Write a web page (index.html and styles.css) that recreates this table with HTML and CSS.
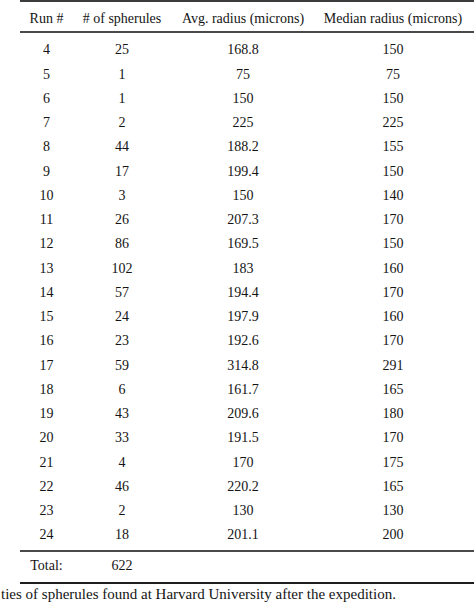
FILE: index.html
```html
<!DOCTYPE html>
<html>
<head>
<meta charset="utf-8">
<link rel="stylesheet" href="styles.css">
</head>
<body>
<div class="page">
  <div class="tbl">
    <div class="rule-top"></div>
    <div class="head row"><span>Run #</span><span># of spherules</span><span>Avg. radius (microns)</span><span>Median radius (microns)</span></div>
    <div class="rule-mid"></div>
    <div class="body">
      <div class="row"><span>4</span><span>25</span><span>168.8</span><span>150</span></div>
      <div class="row"><span>5</span><span>1</span><span>75</span><span>75</span></div>
      <div class="row"><span>6</span><span>1</span><span>150</span><span>150</span></div>
      <div class="row"><span>7</span><span>2</span><span>225</span><span>225</span></div>
      <div class="row"><span>8</span><span>44</span><span>188.2</span><span>155</span></div>
      <div class="row"><span>9</span><span>17</span><span>199.4</span><span>150</span></div>
      <div class="row"><span>10</span><span>3</span><span>150</span><span>140</span></div>
      <div class="row"><span>11</span><span>26</span><span>207.3</span><span>170</span></div>
      <div class="row"><span>12</span><span>86</span><span>169.5</span><span>150</span></div>
      <div class="row"><span>13</span><span>102</span><span>183</span><span>160</span></div>
      <div class="row"><span>14</span><span>57</span><span>194.4</span><span>170</span></div>
      <div class="row"><span>15</span><span>24</span><span>197.9</span><span>160</span></div>
      <div class="row"><span>16</span><span>23</span><span>192.6</span><span>170</span></div>
      <div class="row"><span>17</span><span>59</span><span>314.8</span><span>291</span></div>
      <div class="row"><span>18</span><span>6</span><span>161.7</span><span>165</span></div>
      <div class="row"><span>19</span><span>43</span><span>209.6</span><span>180</span></div>
      <div class="row"><span>20</span><span>33</span><span>191.5</span><span>170</span></div>
      <div class="row"><span>21</span><span>4</span><span>170</span><span>175</span></div>
      <div class="row"><span>22</span><span>46</span><span>220.2</span><span>165</span></div>
      <div class="row"><span>23</span><span>2</span><span>130</span><span>130</span></div>
      <div class="row"><span>24</span><span>18</span><span>201.1</span><span>200</span></div>
    </div>
    <div class="rule-mid"></div>
    <div class="foot row"><span>Total:</span><span>622</span><span></span><span></span></div>
    <div class="rule-bot"></div>
  </div>
  <p class="caption">ties of spherules found at Harvard University after the expedition.</p>
</div>
</body>
</html>
```
FILE: styles.css
```css
html, body {
  margin: 0;
  padding: 0;
  background: #ffffff;
  overflow: hidden;
}
.page {
  width: 474px;
  height: 603px;
  overflow: hidden;
  font-family: "Liberation Serif", "Times New Roman", serif;
  font-size: 14px;
  color: #141414;
}
.tbl {
  margin-left: 20px;
  width: 454px;
}
.rule-top, .rule-mid, .rule-bot {
  height: 2px;
}
.rule-top { background: #3c3c3c; }
.rule-mid { background: #4a4a4a; }
.rule-bot { background: #1e1e1e; }
.row {
  display: grid;
  grid-template-columns: 53px 98px 144px 156px;
  line-height: 24.25px;
  white-space: nowrap;
}
.row span {
  text-align: center;
}
.head {
  padding-top: 5px;
}
.body {
  padding-top: 5px;
  padding-bottom: 2px;
}
.foot {
  padding-top: 2px;
  padding-bottom: 4px;
}
.caption {
  margin: 2px 0 0 1px;
  font-size: 15px;
  line-height: 17px;
  white-space: nowrap;
}
```
